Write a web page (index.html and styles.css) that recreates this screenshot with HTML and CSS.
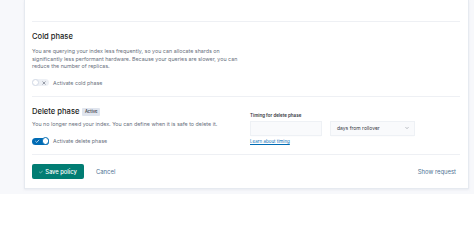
FILE: index.html
```html
<!DOCTYPE html>
<html>
<head>
<meta charset="utf-8">
<link rel="stylesheet" href="styles.css">
</head>
<body>
<div class="page">
  <div class="panel">
    <div class="top-gap"></div>
    <section class="phase cold">
      <h2 class="title">Cold phase</h2>
      <p class="desc">You are querying your index less frequently, so you can allocate shards on significantly less performant hardware. Because your queries are slower, you can reduce the number of replicas.</p>
      <div class="switch-row">
        <span class="switch off">
          <span class="knob"></span>
          <svg class="icon-x" viewBox="0 0 8 8" width="4" height="4"><path d="M1.5 1.5 L6.5 6.5 M6.5 1.5 L1.5 6.5" stroke="#69707d" stroke-width="1.3" fill="none" stroke-linecap="round"/></svg>
        </span>
        <span class="switch-label">Activate cold phase</span>
      </div>
    </section>
    <section class="phase delete">
      <div class="left">
        <div class="title-row">
          <h2 class="title">Delete phase</h2>
          <span class="badge">Active</span>
        </div>
        <p class="desc one">You no longer need your index. You can define when it is safe to delete it.</p>
        <div class="switch-row on-row">
          <span class="switch on">
            <svg class="icon-check" viewBox="0 0 8 8" width="4.5" height="4.5"><path d="M1.2 4.3 L3.1 6.1 L6.8 2" stroke="#fff" stroke-width="1.2" fill="none" stroke-linecap="round" stroke-linejoin="round"/></svg>
            <span class="knob"></span>
          </span>
          <span class="switch-label">Activate delete phase</span>
        </div>
      </div>
      <div class="right">
        <div class="field-label">Timing for delete phase</div>
        <div class="fields">
          <div class="input"></div>
          <div class="select">
            <span>days from rollover</span>
            <svg viewBox="0 0 8 8" width="4" height="4"><path d="M1.5 2.8 L4 5.3 L6.5 2.8" stroke="#69707d" stroke-width="0.9" fill="none" stroke-linecap="round" stroke-linejoin="round"/></svg>
          </div>
        </div>
        <a class="link">Learn about timing</a>
      </div>
    </section>
    <div class="footer">
      <div class="actions">
        <button class="btn-save">
          <svg viewBox="0 0 8 8" width="4" height="4"><path d="M1 4.2 L3 6.1 L7 1.9" stroke="#fff" stroke-width="0.9" fill="none" stroke-linecap="round" stroke-linejoin="round"/></svg>
          <span>Save policy</span>
        </button>
        <a class="btn-empty">Cancel</a>
      </div>
      <a class="btn-empty">Show request</a>
    </div>
  </div>
</div>
</body>
</html>
```
FILE: styles.css
```css
* { box-sizing: border-box; }
html, body { margin: 0; padding: 0; background: #fff; }
body { font-family: Inter, "Noto Sans", sans-serif; color: #343741; }

.page {
  background: #f7f8fb;
  padding: 0 5px 5px 24px;
  width: 474px;
}
.panel {
  background: #fff;
  border: 1px solid #e6eaf0;
  border-top: none;
  box-shadow: 0 1px 2px rgba(152,162,179,0.15);
  padding: 0 8px 0 7px;
}
.top-gap {
  height: 22px;
  border-bottom: 1px solid #eef0f4;
}
.phase {
  border-bottom: 1px solid #eef0f4;
}
.cold { padding: 10px 0 9px; }
.title {
  margin: 0;
  font-size: 7.6px;
  line-height: 10px;
  font-weight: 500;
  color: #1a1c21;
}
.desc {
  margin: 6px 0 0;
  font-size: 5.35px;
  line-height: 7.5px;
  color: #69707d;
  width: 214px;
}
.desc.one { margin-top: 4px; width: auto; white-space: nowrap; }
.switch-row {
  display: flex;
  align-items: center;
  gap: 4px;
  margin-top: 8px;
  height: 8px;
}
.switch {
  width: 17px;
  height: 7px;
  border-radius: 4px;
  display: flex;
  align-items: center;
  position: relative;
}
.switch.off {
  background: #edf0f5;
  justify-content: space-between;
  padding-right: 3px;
}
.switch.off .knob {
  width: 7px; height: 7px; border-radius: 50%;
  background: #fff;
  border: 0.5px solid #d3dae6;
}
.switch.on {
  background: #006bb4;
  justify-content: space-between;
  padding-left: 3px;
}
.switch.on .knob {
  width: 7.5px; height: 7.5px; border-radius: 50%;
  background: #fff;
  border: 0.6px solid #006bb4;
}
.switch-label {
  font-size: 5.3px;
  color: #69707d;
}

.delete {
  padding: 10px 0 9px;
  display: grid;
  grid-template-columns: 218px auto;
}
.title-row {
  display: flex;
  align-items: center;
  gap: 3px;
}
.badge {
  background: #e0e5ee;
  font-size: 4.2px;
  font-weight: 500;
  line-height: 8px;
  padding: 0 2.5px;
  border-radius: 1px;
  color: #343741;
}
.on-row { margin-top: 9px; }

.right { padding-top: 5px; }
.field-label {
  font-size: 4.5px;
  line-height: 7px;
  font-weight: 600;
  color: #343741;
}
.fields {
  display: flex;
  gap: 8px;
  margin-top: 2px;
}
.input, .select {
  height: 15.5px;
  background: #f9fafc;
  border: 0.5px solid #eef1f5;
  box-shadow: 0 1px 1px -1px rgba(152,162,179,0.2);
}
.input { width: 72px; }
.select {
  width: 85px;
  display: flex;
  align-items: center;
  justify-content: space-between;
  padding: 0 5px 0 6px;
  font-size: 5px;
  color: #343741;
}
.link {
  display: block;
  margin-top: 1.5px;
  font-size: 4.5px;
  line-height: 7px;
  color: #006bb4;
  text-decoration: underline;
}

.footer {
  display: flex;
  justify-content: space-between;
  align-items: center;
  padding: 9px 4px 9px 0;
}
.actions { display: flex; align-items: center; gap: 12px; }
.btn-save {
  width: 52px;
  height: 15px;
  background: #017d73;
  border: none;
  border-radius: 2px;
  color: #fff;
  font-family: Inter, "Noto Sans", sans-serif;
  font-size: 5.8px;
  font-weight: 500;
  display: flex;
  align-items: center;
  justify-content: center;
  gap: 2px;
  padding: 0;
}
.btn-empty {
  font-size: 5.9px;
  color: #4f7394;
}
```
